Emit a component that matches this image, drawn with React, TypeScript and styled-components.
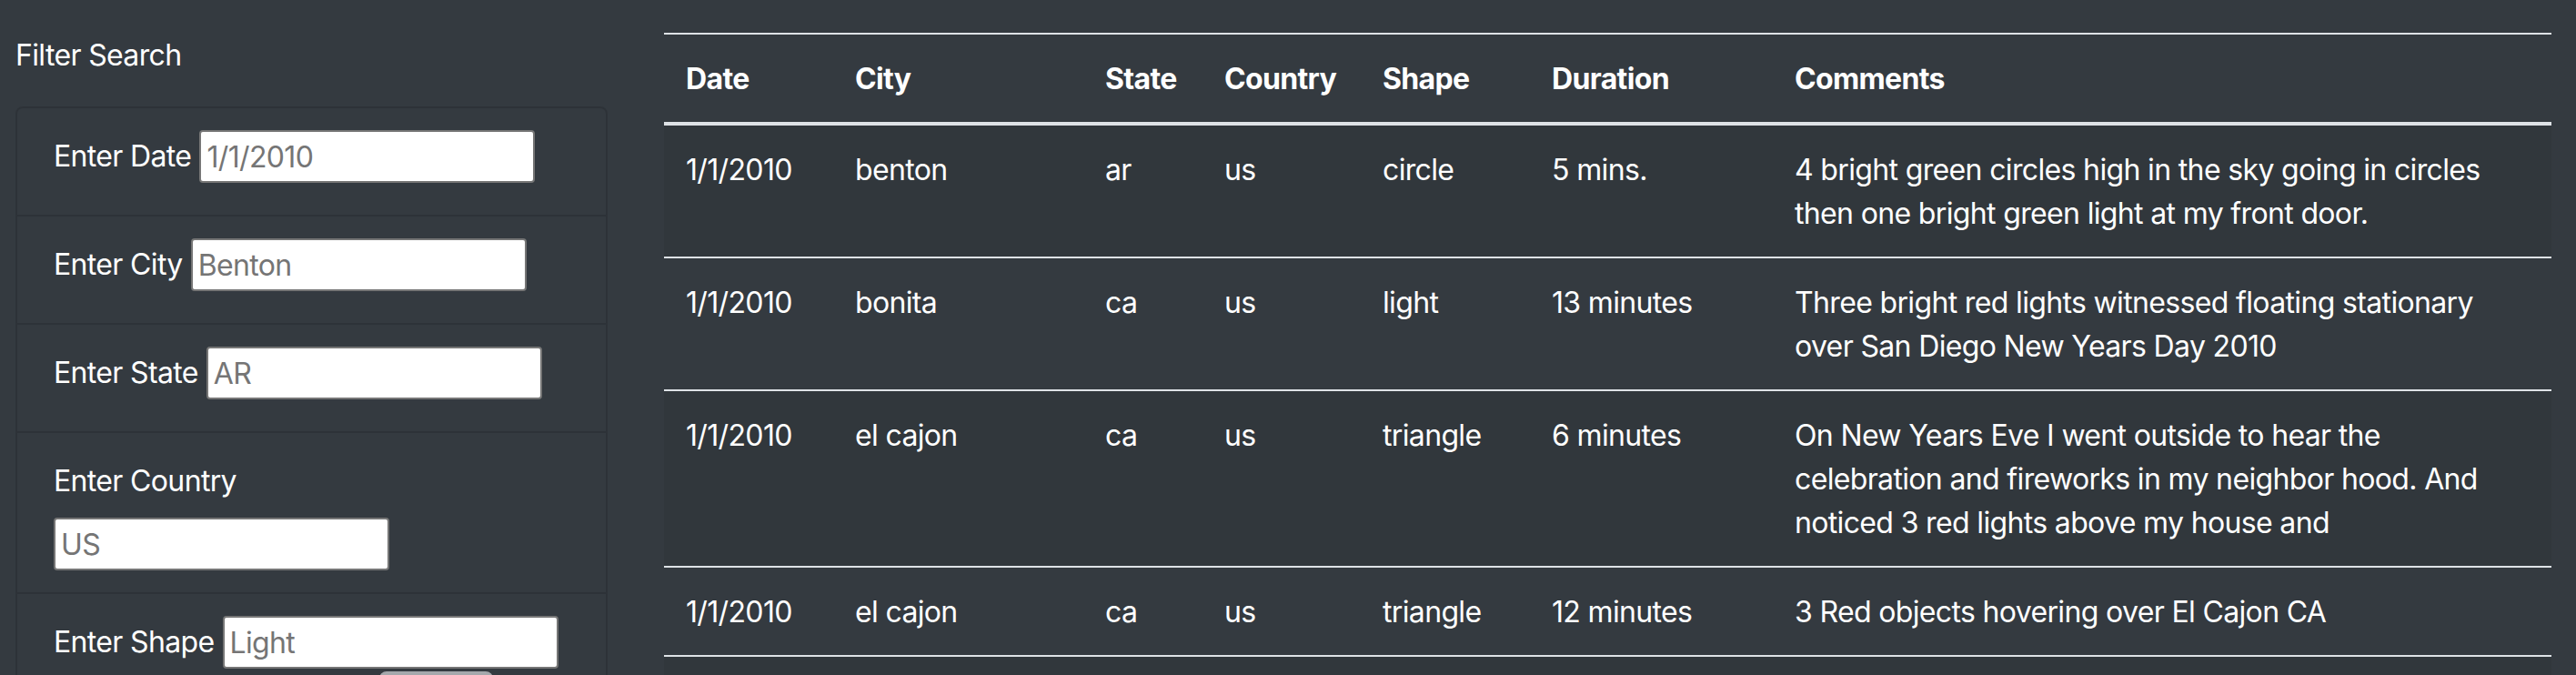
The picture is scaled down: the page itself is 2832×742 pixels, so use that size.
import React from "react";
import styled, { createGlobalStyle } from "styled-components";

// Page is a 2x-scaled bootstrap-ish dark layout: 16px base font doubled to 32px.

const GlobalStyle = createGlobalStyle`
  html, body {
    margin: 0;
    padding: 0;
    background: #343a40;
  }
  body {
    font-family: Inter, "Noto Sans", "Liberation Sans", sans-serif;
    font-size: 32px;
    line-height: 48px;
    letter-spacing: -0.65px;
    color: #fff;
    overflow: hidden;
  }
`;

const Page = styled.div`
  display: grid;
  grid-template-columns: 651px 1fr;
  column-gap: 62px;
  padding: 0 27px 0 17px;
  height: 742px;
  overflow: hidden;
`;

const Sidebar = styled.aside`
  min-width: 0;
`;

const SidebarTitle = styled.div`
  margin: 37px 0 32px;
`;

const FilterList = styled.ul`
  list-style: none;
  margin: 0;
  padding: 0;
  border: 2px solid rgba(0, 0, 0, 0.125);
  border-radius: 8px;
`;

const FilterItem = styled.li`
  display: flex;
  flex-wrap: wrap;
  align-items: flex-start;
  column-gap: 9px;
  padding: 24px 40px;
  & + & {
    border-top: 2px solid rgba(0, 0, 0, 0.125);
  }
`;

const FilterLabel = styled.label`
  margin: 5px 0 16px;
  white-space: nowrap;
`;

const FilterInput = styled.input`
  box-sizing: border-box;
  width: 369px;
  height: 58px;
  margin: 0;
  padding: 0 6px;
  border: 2px solid #767676;
  border-radius: 4px;
  background: #fff;
  font: inherit;
  letter-spacing: inherit;
  color: #495057;
  outline: none;
  &::placeholder {
    color: #757575;
  }
`;

const FilterButton = styled.button`
  flex-basis: 125px;
  height: 72px;
  margin: -8px 0 0 358px;
  border: none;
  border-radius: 8px;
  background: #a4a8ac;
  color: #212529;
  font: inherit;
  letter-spacing: inherit;
`;

const Main = styled.main`
  min-width: 0;
`;

const Table = styled.table`
  width: 100%;
  margin-top: 36px;
  border-collapse: collapse;
  table-layout: fixed;
  color: #fff;
`;

const HeadCell = styled.th<{ $w?: number }>`
  box-sizing: border-box;
  width: ${(p) => (p.$w ? `${p.$w}px` : "auto")};
  padding: 25px 24px 23px;
  text-align: left;
  vertical-align: bottom;
  font-weight: 700;
  border-top: 2px solid #dee2e6;
  border-bottom: 4px solid #dee2e6;
`;

const BodyRow = styled.tr`
  &:nth-of-type(odd) {
    background: rgba(0, 0, 0, 0.05);
  }
`;

const Cell = styled.td`
  padding: 25px 24px 23px;
  vertical-align: top;
  border-top: 2px solid #dee2e6;
`;

const columns = [
  { key: "datetime", label: "Date", w: 186 },
  { key: "city", label: "City", w: 275 },
  { key: "state", label: "State", w: 131 },
  { key: "country", label: "Country", w: 174 },
  { key: "shape", label: "Shape", w: 186 },
  { key: "duration", label: "Duration", w: 267 },
  { key: "comments", label: "Comments" },
] as const;

type Sighting = Record<(typeof columns)[number]["key"], string>;

const sightings: Sighting[] = [
  {
    datetime: "1/1/2010",
    city: "benton",
    state: "ar",
    country: "us",
    shape: "circle",
    duration: "5 mins.",
    comments: "4 bright green circles high in the sky going in circles then one bright green light at my front door.",
  },
  {
    datetime: "1/1/2010",
    city: "bonita",
    state: "ca",
    country: "us",
    shape: "light",
    duration: "13 minutes",
    comments: "Three bright red lights witnessed floating stationary over San Diego New Years Day 2010",
  },
  {
    datetime: "1/1/2010",
    city: "el cajon",
    state: "ca",
    country: "us",
    shape: "triangle",
    duration: "6 minutes",
    comments:
      "On New Years Eve I went outside to hear the celebration and fireworks in my neighbor hood. And noticed 3 red lights above my house and",
  },
  {
    datetime: "1/1/2010",
    city: "el cajon",
    state: "ca",
    country: "us",
    shape: "triangle",
    duration: "12 minutes",
    comments: "3 Red objects hovering over El Cajon CA",
  },
  {
    datetime: "1/1/2010",
    city: "calumet city",
    state: "il",
    country: "us",
    shape: "light",
    duration: "3 minutes",
    comments: "3 orange lights moving in formation; then disappearing.",
  },
];

const filters = [
  { id: "datetime", label: "Enter Date", placeholder: "1/1/2010" },
  { id: "city", label: "Enter City", placeholder: "Benton" },
  { id: "state", label: "Enter State", placeholder: "AR" },
  { id: "country", label: "Enter Country", placeholder: "US" },
  { id: "shape", label: "Enter Shape", placeholder: "Light" },
];

export default function App() {
  return (
    <>
      <GlobalStyle />
      <Page>
        <Sidebar>
          <SidebarTitle>Filter Search</SidebarTitle>
          <FilterList>
            {filters.map((f, i) => (
              <FilterItem key={f.id}>
                <FilterLabel htmlFor={f.id}>{f.label}</FilterLabel>
                <FilterInput id={f.id} type="text" placeholder={f.placeholder} />
                {i === filters.length - 1 && <FilterButton type="button">Filter Table</FilterButton>}
              </FilterItem>
            ))}
          </FilterList>
        </Sidebar>
        <Main>
          <Table>
            <thead>
              <tr>
                {columns.map((c) => (
                  <HeadCell key={c.key} $w={"w" in c ? c.w : undefined}>
                    {c.label}
                  </HeadCell>
                ))}
              </tr>
            </thead>
            <tbody>
              {sightings.map((s, i) => (
                <BodyRow key={i}>
                  {columns.map((c) => (
                    <Cell key={c.key}>{s[c.key]}</Cell>
                  ))}
                </BodyRow>
              ))}
            </tbody>
          </Table>
        </Main>
      </Page>
    </>
  );
}
